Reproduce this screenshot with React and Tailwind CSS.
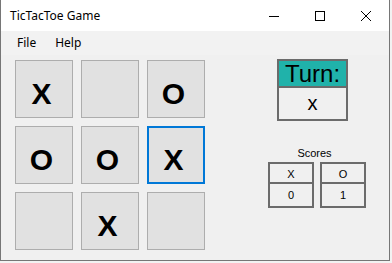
import React from "react";

const cells = ["X", "", "O", "O", "O", "X", "", "X", ""];

function Cell({ v, selected }) {
  return (
    <div
      className={
        "w-[58px] h-[58px] bg-[#e1e1e1] flex items-center justify-center pt-[8px] pr-[5px] font-bold text-[30px] text-black " +
        (selected ? "border-2 border-[#0078d7]" : "border border-[#adadad]")
      }
      style={{ fontFamily: '"Liberation Sans", Arial, sans-serif' }}
    >
      {v}
    </div>
  );
}

function ScoreBox({ head, val }) {
  return (
    <div className="w-[46px] h-[46px] border-2 border-[#6b6b6b] flex flex-col">
      <div className="h-[20px] border-b-2 border-[#6b6b6b] flex items-center justify-center pt-[2px] text-[11px] leading-[13px]">
        {head}
      </div>
      <div className="h-[20px] flex items-center justify-center pt-[2px] text-[11px] leading-[13px]">
        {val}
      </div>
    </div>
  );
}

export default function App() {
  return (
    <div className="w-[392px] h-[263px] bg-[#f2f2f2] overflow-hidden">
      <div className="w-[390px] h-[261px] border-x border-b border-[#767676] bg-[#f0f0f0] flex flex-col">
        <div
          className="h-[31px] bg-white flex items-center shrink-0"
          style={{ fontFamily: '"Noto Sans", "Open Sans", sans-serif' }}
        >
          <div className="pl-[9px] text-[12px] text-black flex-1">TicTacToe Game</div>
          <div className="flex h-full">
            <div className="w-[46px] h-full flex items-center justify-center">
              <svg width="10" height="10" viewBox="0 0 10 10">
                <line x1="0" y1="5.5" x2="10" y2="5.5" stroke="#000" strokeWidth="1" />
              </svg>
            </div>
            <div className="w-[46px] h-full flex items-center justify-center">
              <svg width="10" height="10" viewBox="0 0 10 10">
                <rect x="0.5" y="0.5" width="9" height="9" fill="none" stroke="#000" strokeWidth="1" />
              </svg>
            </div>
            <div className="w-[46px] h-full flex items-center justify-center">
              <svg width="10" height="10" viewBox="0 0 10 10">
                <line x1="0" y1="0" x2="10" y2="10" stroke="#000" strokeWidth="1" />
                <line x1="10" y1="0" x2="0" y2="10" stroke="#000" strokeWidth="1" />
              </svg>
            </div>
          </div>
        </div>
        <div
          className="h-[24px] bg-[#f2f2f2] flex items-center text-[12px] text-black shrink-0"
          style={{ fontFamily: '"Noto Sans", "Open Sans", sans-serif' }}
        >
          <span className="ml-[16px]">File</span>
          <span className="ml-[19px]">Help</span>
        </div>
        <div
          className="flex flex-1"
          style={{ fontFamily: '"Liberation Sans", Arial, sans-serif' }}
        >
          <div className="ml-[14px] mt-[5px] grid grid-cols-[58px_58px_58px] gap-[8px] h-fit">
            {cells.map((v, i) => (
              <Cell key={i} v={v} selected={i === 5} />
            ))}
          </div>
          <div className="ml-[63px] mt-[4px] flex flex-col w-[98px]">
            <div className="ml-[9px] w-[71px] h-[62px] border-2 border-[#6b6b6b] flex flex-col">
              <div className="h-[27px] bg-[#20b2aa] border-b-2 border-[#6b6b6b] flex items-center justify-center text-[24px] leading-[27px] text-black">
                Turn:
              </div>
              <div className="h-[29px] flex items-center justify-center pt-[1px] text-[20px] leading-[29px] text-black">
                x
              </div>
            </div>
            <div className="mt-[26px] h-[13px] text-[11px] leading-[13px] text-center pr-[5px] text-black">
              Scores
            </div>
            <div className="mt-[2px] flex gap-[6px]">
              <ScoreBox head="X" val="0" />
              <ScoreBox head="O" val="1" />
            </div>
          </div>
        </div>
      </div>
    </div>
  );
}
